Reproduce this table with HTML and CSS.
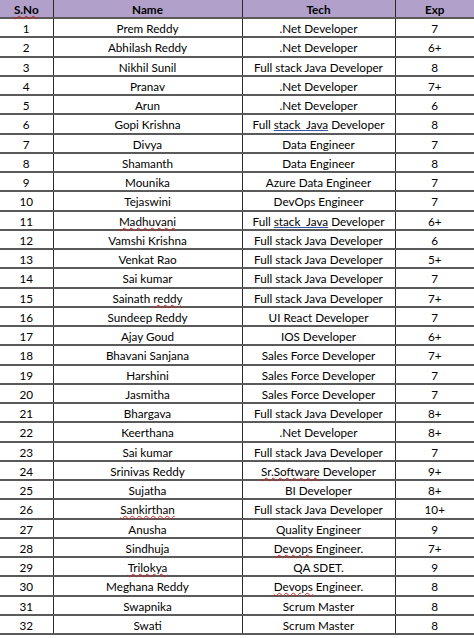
FILE: index.html
```html
<!DOCTYPE html>
<html>
<head>
<meta charset="utf-8">
<link rel="stylesheet" href="styles.css">
</head>
<body>
<table class="sheet">
<colgroup><col class="c-no"><col class="c-name"><col class="c-tech"><col class="c-exp"></colgroup>
<thead>
<tr><th><span class="sp">S.No</span></th><th>Name</th><th>Tech</th><th>Exp</th></tr>
</thead>
<tbody>
<tr><td>1</td><td>Prem Reddy</td><td>.Net Developer</td><td>7</td></tr>
<tr><td>2</td><td>Abhilash Reddy</td><td>.Net Developer</td><td>6+</td></tr>
<tr><td>3</td><td>Nikhil Sunil</td><td>Full stack Java Developer</td><td>8</td></tr>
<tr><td>4</td><td>Pranav</td><td>.Net Developer</td><td>7+</td></tr>
<tr><td>5</td><td>Arun</td><td>.Net Developer</td><td>6</td></tr>
<tr><td>6</td><td>Gopi Krishna</td><td>Full <span class="gr">stack&nbsp; Java</span> Developer</td><td>8</td></tr>
<tr><td>7</td><td>Divya</td><td>Data Engineer</td><td>7</td></tr>
<tr><td>8</td><td>Shamanth</td><td>Data Engineer</td><td>8</td></tr>
<tr><td>9</td><td>Mounika</td><td>Azure Data Engineer</td><td>7</td></tr>
<tr><td>10</td><td>Tejaswini</td><td>DevOps Engineer</td><td>7</td></tr>
<tr><td>11</td><td><span class="sp">Madhuvani</span></td><td>Full <span class="gr">stack&nbsp; Java</span> Developer</td><td>6+</td></tr>
<tr><td>12</td><td>Vamshi Krishna</td><td>Full stack Java Developer</td><td>6</td></tr>
<tr><td>13</td><td>Venkat Rao</td><td>Full stack Java Developer</td><td>5+</td></tr>
<tr><td>14</td><td>Sai kumar</td><td>Full stack Java Developer</td><td>7</td></tr>
<tr><td>15</td><td>Sainath <span class="sp">reddy</span></td><td>Full stack Java Developer</td><td>7+</td></tr>
<tr><td>16</td><td>Sundeep Reddy</td><td>UI React Developer</td><td>7</td></tr>
<tr><td>17</td><td>Ajay Goud</td><td>IOS Developer</td><td>6+</td></tr>
<tr><td>18</td><td>Bhavani Sanjana</td><td>Sales Force Developer</td><td>7+</td></tr>
<tr><td>19</td><td>Harshini</td><td>Sales Force Developer</td><td>7</td></tr>
<tr><td>20</td><td>Jasmitha</td><td>Sales Force Developer</td><td>7</td></tr>
<tr><td>21</td><td>Bhargava</td><td>Full stack Java Developer</td><td>8+</td></tr>
<tr><td>22</td><td>Keerthana</td><td>.Net Developer</td><td>8+</td></tr>
<tr><td>23</td><td>Sai kumar</td><td>Full stack Java Developer</td><td>7</td></tr>
<tr><td>24</td><td>Srinivas Reddy</td><td><span class="sp">Sr.Software</span> Developer</td><td>9+</td></tr>
<tr><td>25</td><td>Sujatha</td><td>BI Developer</td><td>8+</td></tr>
<tr><td>26</td><td><span class="sp">Sankirthan</span></td><td>Full stack Java Developer</td><td>10+</td></tr>
<tr><td>27</td><td>Anusha</td><td>Quality Engineer</td><td>9</td></tr>
<tr><td>28</td><td>Sindhuja</td><td><span class="sp">Devops</span> Engineer.</td><td>7+</td></tr>
<tr><td>29</td><td><span class="sp">Trilokya</span></td><td>QA SDET.</td><td>9</td></tr>
<tr><td>30</td><td>Meghana Reddy</td><td><span class="sp">Devops</span> Engineer.</td><td>8</td></tr>
<tr><td>31</td><td>Swapnika</td><td>Scrum Master</td><td>8</td></tr>
<tr><td>32</td><td>Swati</td><td>Scrum Master</td><td>8</td></tr>
</tbody>
</table>
</body>
</html>
```
FILE: styles.css
```css
html, body {
  margin: 0;
  padding: 0;
  background: #ffffff;
}
.sheet {
  border-collapse: collapse;
  table-layout: fixed;
  width: 474px;
  font-family: Lato, "Liberation Sans", sans-serif;
  font-size: 11.7px;
  color: #000000;
}
.c-no { width: 53px; }
.c-name { width: 189px; }
.c-tech { width: 153px; }
.c-exp { width: 79px; }
.sheet th, .sheet td {
  text-align: center;
  padding: 2px 0 0 0;
  line-height: 15px;
  height: 15.25px;
  border-bottom: 2px solid #5a5a5a;
  border-right: 1.5px solid #2a2a2a;
  white-space: nowrap;
}
.sheet th:last-child, .sheet td:last-child {
  border-right: none;
}
.sheet th {
  background: #b1a0c9;
  font-weight: bold;
  height: 15px;
  padding-top: 2px;
}
.sp {
  text-decoration: underline wavy #d02020;
  text-decoration-thickness: 1px;
  text-underline-offset: 1px;
}
.gr {
  text-decoration: underline #3a55a8;
  text-decoration-thickness: 1px;
  text-underline-offset: 1px;
}
```
